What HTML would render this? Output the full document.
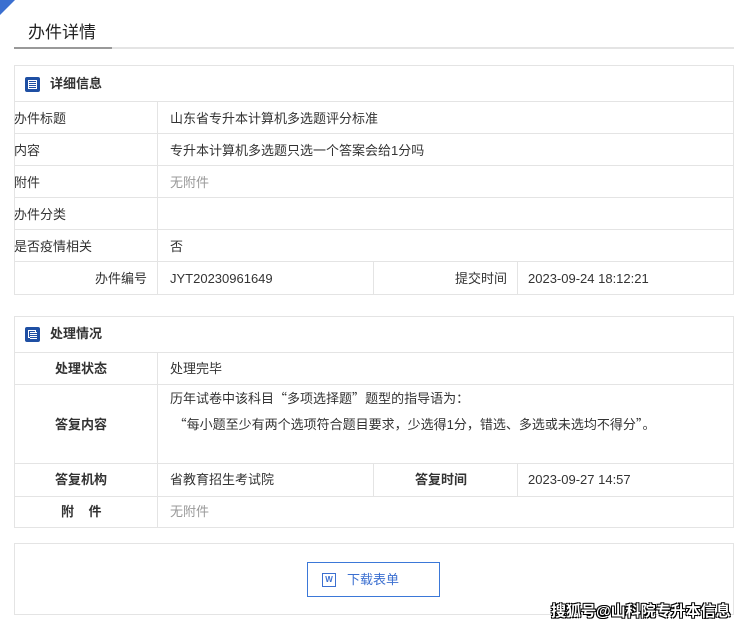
<!DOCTYPE html>
<html><head><meta charset="utf-8"><style>
*{margin:0;padding:0;box-sizing:border-box}
body{width:749px;height:630px;background:#fff;font-family:"Liberation Sans","Noto Sans CJK SC",sans-serif;font-size:13px;color:#333;position:relative;overflow:hidden}
.a{position:absolute}
.line{position:absolute;background:#e4e4e4}
.t{position:absolute;white-space:nowrap;line-height:16px}
.b{font-weight:bold;color:#333}
.q{font-family:"Noto Sans CJK SC",sans-serif}
</style></head><body>
<svg class="a" style="left:0;top:0" width="16" height="16"><polygon points="0,0 15,0 0,15" fill="#3b6fd0"/></svg>
<div class="t" style="left:28px;top:23px;font-size:17px;color:#222;line-height:20px">办件详情</div>
<div class="a" style="left:14px;top:47px;width:720px;height:2px;background:#e4e4e4"></div>
<div class="a" style="left:14px;top:47px;width:98px;height:2px;background:#999"></div>

<div class="a" style="left:14px;top:65px;width:720px;height:230px;border:1px solid #e4e4e4"></div>
<div class="a" style="left:25px;top:77px;width:15px;height:15px;background:#1f4fa3;border-radius:2px"></div>
<div class="a" style="left:28px;top:80px;width:9px;height:9px;background:#fff"></div>
<div class="a" style="left:29px;top:81px;width:7px;height:7px;background:repeating-linear-gradient(#1f4fa3 0 1px,#fff 1px 2px)"></div>
<div class="t b" style="left:50px;top:76px">详细信息</div>
<div class="line" style="left:14px;top:101px;width:720px;height:1px"></div>
<div class="line" style="left:14px;top:133px;width:720px;height:1px"></div>
<div class="line" style="left:14px;top:165px;width:720px;height:1px"></div>
<div class="line" style="left:14px;top:197px;width:720px;height:1px"></div>
<div class="line" style="left:14px;top:229px;width:720px;height:1px"></div>
<div class="line" style="left:14px;top:261px;width:720px;height:1px"></div>
<div class="line" style="left:157px;top:101px;width:1px;height:193px"></div>
<div class="line" style="left:373px;top:262px;width:1px;height:32px"></div>
<div class="line" style="left:517px;top:262px;width:1px;height:32px"></div>
<div class="t" style="left:14px;top:111px">办件标题</div>
<div class="t" style="left:170px;top:111px">山东省专升本计算机多选题评分标准</div>
<div class="t" style="left:14px;top:143px">内容</div>
<div class="t" style="left:170px;top:143px">专升本计算机多选题只选一个答案会给1分吗</div>
<div class="t" style="left:14px;top:175px">附件</div>
<div class="t" style="left:170px;top:175px;color:#999">无附件</div>
<div class="t" style="left:14px;top:207px">办件分类</div>
<div class="t" style="left:14px;top:239px">是否疫情相关</div>
<div class="t" style="left:170px;top:239px">否</div>
<div class="t" style="left:95px;top:271px">办件编号</div>
<div class="t" style="left:170px;top:271px">JYT20230961649</div>
<div class="t" style="left:455px;top:271px">提交时间</div>
<div class="t" style="left:528px;top:271px">2023-09-24 18:12:21</div>

<div class="a" style="left:14px;top:316px;width:720px;height:212px;border:1px solid #e4e4e4"></div>
<div class="a" style="left:25px;top:327px;width:15px;height:15px;background:#1f4fa3;border-radius:2px"></div>
<div class="a" style="left:28px;top:330px;width:8px;height:8px;border:1px solid #fff"></div>
<div class="a" style="left:30px;top:332px;width:7px;height:7px;background:repeating-linear-gradient(#fff 0 1px,#1f4fa3 1px 2px)"></div>
<div class="t b" style="left:50px;top:326px">处理情况</div>
<div class="line" style="left:14px;top:352px;width:720px;height:1px"></div>
<div class="line" style="left:14px;top:384px;width:720px;height:1px"></div>
<div class="line" style="left:14px;top:463px;width:720px;height:1px"></div>
<div class="line" style="left:14px;top:496px;width:720px;height:1px"></div>
<div class="line" style="left:157px;top:352px;width:1px;height:175px"></div>
<div class="line" style="left:373px;top:463px;width:1px;height:33px"></div>
<div class="line" style="left:517px;top:463px;width:1px;height:33px"></div>
<div class="t b" style="left:55px;top:361px">处理状态</div>
<div class="t" style="left:170px;top:361px">处理完毕</div>
<div class="t b" style="left:55px;top:417px">答复内容</div>
<div class="t" style="left:170px;top:390px">历年试卷中该科目<span class="q">“</span>多项选择题<span class="q">”</span>题型的指导语为<span class="q">：</span></div>
<div class="t" style="left:170px;top:416px">&nbsp;<span class="q">“</span>每小题至少有两个选项符合题目要求<span class="q">，</span>少选得1分<span class="q">，</span>错选、多选或未选均不得分<span class="q">”。</span></div>
<div class="t b" style="left:55px;top:472px">答复机构</div>
<div class="t" style="left:170px;top:472px">省教育招生考试院</div>
<div class="t b" style="left:415px;top:472px">答复时间</div>
<div class="t" style="left:528px;top:472px">2023-09-27 14:57</div>
<div class="t b" style="left:61px;top:504px">附&nbsp;&nbsp;&nbsp;&nbsp;件</div>
<div class="t" style="left:170px;top:504px;color:#999">无附件</div>

<div class="a" style="left:14px;top:543px;width:720px;height:72px;border:1px solid #e4e4e4"></div>
<div class="a" style="left:307px;top:562px;width:133px;height:35px;border:1px solid #3b78d8"></div>
<div class="a" style="left:322px;top:573px;width:14px;height:14px;border:1px solid #3b6fd0;font-size:8px;font-weight:bold;color:#3b6fd0;text-align:center;line-height:12px">W</div>
<div class="t" style="left:347px;top:572px;color:#3b6fd0">下载表单</div>
<div class="t" style="left:551px;top:604px;font-size:15px;font-weight:bold;color:#fff;text-shadow:1px 1px 0 #000,-1px -1px 0 #000,1px -1px 0 #000,-1px 1px 0 #000">搜狐号@山科院专升本信息</div>
</body></html>
